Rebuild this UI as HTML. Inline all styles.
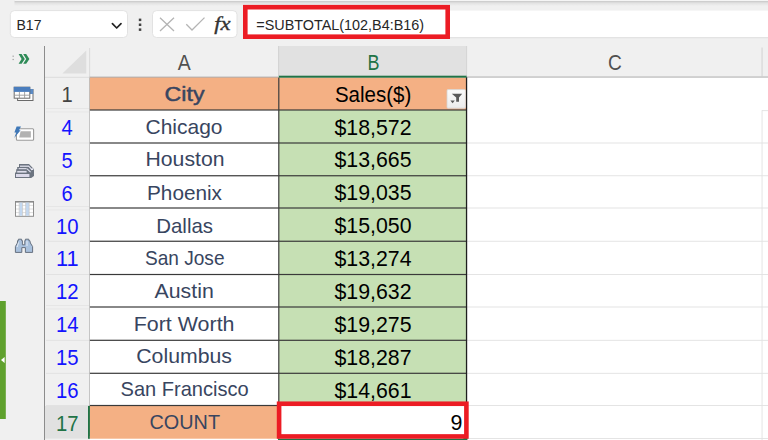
<!DOCTYPE html>
<html lang="en">
<head>
<meta charset="utf-8">
<title>SUBTOTAL count</title>
<style>
html,body{margin:0;padding:0;background:#f0f0f0;}
body{width:768px;height:440px;overflow:hidden;position:relative;font-family:"Liberation Sans",sans-serif;}
svg{position:absolute;left:0;top:0;display:block;}
text{font-family:"Liberation Sans",sans-serif;}
.fx{font-family:"Liberation Serif",serif;font-style:italic;}
</style>
</head>
<body>
<svg width="768" height="440" viewBox="0 0 768 440">
<defs>
<linearGradient id="sh" x1="0" y1="0" x2="0" y2="1"><stop offset="0" stop-color="#c2c2c2"/><stop offset="0.45" stop-color="#e2e2e2"/><stop offset="1" stop-color="#f0f0f0"/></linearGradient>
<linearGradient id="fb" x1="0" y1="0" x2="0" y2="1"><stop offset="0" stop-color="#fbfbfb"/><stop offset="1" stop-color="#ececec"/></linearGradient>
</defs>
<rect x="0" y="0" width="768" height="440" fill="#f0f0f0"/>
<!-- top ribbon edge -->
<rect x="14.5" y="0.6" width="760" height="5.4" fill="url(#sh)"/>
<rect x="14.5" y="-3" width="760" height="3.7" fill="#ffffff"/>

<g id="namebox">
<rect x="10.3" y="10.6" width="117.2" height="26.9" rx="4" fill="#fff" stroke="#e2e2e2" stroke-width="1"/>
<text x="16.5" y="30" font-size="14" fill="#262626" textLength="25" lengthAdjust="spacingAndGlyphs">B17</text>
<polyline points="112.4,23.6 116.7,28 121,23.6" fill="none" stroke="#222" stroke-width="1.7" stroke-linecap="round" stroke-linejoin="round"/>
</g>
<g fill="#444"><rect x="138.8" y="18.6" width="2.5" height="2.5"/><rect x="138.8" y="23.5" width="2.5" height="2.5"/><rect x="138.8" y="28.4" width="2.5" height="2.5"/></g>
<g id="fbuttons">
<rect x="152.5" y="10.6" width="84.5" height="26.9" rx="4" fill="#fff" stroke="#e2e2e2" stroke-width="1"/>
<path d="M160,17.8 L174,31 M174,17.8 L160,31" stroke="#b4b4b4" stroke-width="1.3" fill="none"/>
<polyline points="186.3,24.2 192,30 204.5,17.6" stroke="#b4b4b4" stroke-width="1.3" fill="none"/>
<text class="fx" x="214.3" y="29.8" font-size="19.5" fill="#333" stroke="#333" stroke-width="0.35" textLength="16.4" lengthAdjust="spacingAndGlyphs">fx</text>
</g>
<g id="formulabar">
<rect x="243" y="10.6" width="530" height="26.7" fill="#fff"/>
<rect x="243" y="37.3" width="530" height="0.9" fill="#dcdcdc"/>
<rect x="245.3" y="7.2" width="202.4" height="29.5" fill="#fff" stroke="#ec1c24" stroke-width="4.6"/>
<text x="256.3" y="29.8" font-size="14.4" fill="#262626" textLength="167.8" lengthAdjust="spacingAndGlyphs">=SUBTOTAL(102,B4:B16)</text>
</g>
<g id="sidebar">
<rect x="44" y="46" width="1" height="394" fill="#8c8c8c"/>
<rect x="0" y="301" width="5.8" height="118" fill="#5fa12d"/>
<polygon points="1,360 4.6,357 4.6,363" fill="#fff"/>
<g fill="#b0b0b0"><rect x="12.4" y="55.6" width="1.6" height="1.2"/><rect x="12.4" y="58.9" width="1.6" height="1.2"/></g>
<g fill="#2e8b57"><path d="M18.6,54 L21.6,54 L24.8,58.9 L21.6,63.8 L18.6,63.8 L21.6,58.9 Z"/><path d="M23.2,54 L26.2,54 L29.4,58.9 L26.2,63.8 L23.2,63.8 L26.2,58.9 Z"/></g>
<g id="ic1">
<rect x="17.6" y="89.5" width="15.4" height="11" fill="#fff" stroke="#6a6a6a" stroke-width="1"/>
<rect x="29.8" y="89" width="3.4" height="5" fill="#5b8ac4"/>
<rect x="14.2" y="87.2" width="15.6" height="11" fill="#fff" stroke="#6a6a6a" stroke-width="1"/>
<rect x="13.8" y="86.9" width="16.4" height="5" fill="#4a7dbd"/>
<path d="M14.2,95.2 H29.8 M19.4,92 V98.2 M24.6,92 V98.2" stroke="#9a9a9a" stroke-width="0.9" fill="none"/>
</g>
<g id="ic2">
<rect x="16.4" y="128.7" width="17.2" height="11.5" rx="1" fill="#fff" stroke="#9a9a9a" stroke-width="1.1"/>
<polygon points="20.6,131.2 30.9,131.2 30.9,137.6 19.2,137.6" fill="#b2b2b2"/>
<polygon points="16.6,126.6 21,126.6 19,130.2 20.6,130.2 14.2,138 16.4,132.6 14.4,132.6" fill="#3f78b8"/>
</g>
<g id="ic3">
<path d="M19,164 H29 L34,169.2 V176 L31.2,178 H15 V172.6 H16.2 V169.2 H17.2 V167 H19 Z" fill="#6c7480"/>
<rect x="20" y="165.6" width="9" height="1.2" fill="#e6e6f2"/>
<rect x="18.6" y="168.1" width="8" height="1.1" fill="#e2e2ee"/>
<rect x="17.2" y="170.9" width="9.4" height="1.7" fill="#dedeec"/>
<rect x="16" y="174" width="13.4" height="3" fill="#dcdaea"/>
<path d="M28.6,166.2 L31.4,169.2 M26.8,168.6 L30.6,172.2" stroke="#e0e0ee" stroke-width="1.1" fill="none"/>
<path d="M31,169.6 L33.2,169" stroke="#f0f0fa" stroke-width="1.6" fill="none"/>
</g>
<g id="ic4">
<rect x="15.5" y="201.5" width="18" height="14.8" fill="#fff" stroke="#8e8e8e" stroke-width="1"/>
<rect x="15.2" y="201.1" width="18.6" height="1.5" fill="#8a8a8a"/>
<path d="M16,205.4 H33 M16,209 H33 M16,212.6 H33" stroke="#d6d6d6" stroke-width="0.8"/>
<rect x="19.4" y="202.6" width="3" height="13.2" fill="#c3d8f0"/>
<rect x="25.8" y="202.6" width="3.2" height="13.2" fill="#c3d8f0"/>
<path d="M19.2,202.6 V216 M22.6,202.6 V216 M25.6,202.6 V216 M29.2,202.6 V216" stroke="#c4c4c4" stroke-width="0.7"/>
</g>
<g id="ic5">
<path d="M18.4,239.2 H21.6 V240.6 H22.4 V244.8 H24.8 V240.6 H25.4 V239.2 H28.8 V240.6 H29.8 L30.4,243 L32.6,246.6 V252.4 H25.4 V247.6 H21.8 V252.4 H15.4 V246.6 L17.4,243 L17.6,240.6 H18.4 Z" fill="#a9c1dd" stroke="#66707f" stroke-width="1" stroke-linejoin="round"/>
<path d="M17.2,247 L18.6,242.4 M27,241 V246" stroke="#e4ecf6" stroke-width="1"/>
</g>
</g>
<g id="colheaders">
<polygon points="86.3,50.6 86.3,73.6 62.4,73.6" fill="#dedede"/>
<rect x="278.6" y="46" width="187.9" height="30" fill="#e1e1e1"/>
<rect x="45" y="76.8" width="44.5" height="0.9" fill="#d9d9d9"/>
<rect x="89.2" y="48" width="0.9" height="29" fill="#d9d9d9"/>
<rect x="89.6" y="76.7" width="189" height="1.1" fill="#9c9c9c"/>
<rect x="466.6" y="76.6" width="302" height="1.1" fill="#a6a6a6"/>
<rect x="278.2" y="46" width="0.9" height="30" fill="#cfcfcf"/>
<rect x="466.2" y="46" width="0.9" height="31" fill="#d2d2d2"/>
<rect x="761.6" y="47.5" width="0.9" height="29.5" fill="#cdcdcd"/>
<text x="184.3" y="70.3" font-size="22" fill="#505050" text-anchor="middle" textLength="13" lengthAdjust="spacingAndGlyphs">A</text>
<text x="373.6" y="70.3" font-size="22" fill="#217346" text-anchor="middle" textLength="12" lengthAdjust="spacingAndGlyphs">B</text>
<text x="615" y="70.3" font-size="22" fill="#505050" text-anchor="middle" textLength="13.8" lengthAdjust="spacingAndGlyphs">C</text>
</g>
<g id="rowheaders">
<rect x="45" y="406" width="43.6" height="32.6" fill="#e1e1e1"/>
<rect x="88" y="405.6" width="2" height="33.2" fill="#217346"/>
<rect x="89.2" y="77.7" width="0.9" height="328" fill="#b4b4b4"/>
<rect x="46" y="108.00" width="43" height="0.9" fill="#e5e5e5"/>
<rect x="46" y="111.50" width="43" height="0.9" fill="#e5e5e5"/>
<rect x="46" y="142.55" width="43" height="0.9" fill="#e0e0e0"/>
<rect x="46" y="175.30" width="43" height="0.9" fill="#e0e0e0"/>
<rect x="46" y="206.00" width="43" height="0.9" fill="#e5e5e5"/>
<rect x="46" y="209.50" width="43" height="0.9" fill="#e5e5e5"/>
<rect x="46" y="240.80" width="43" height="0.9" fill="#e0e0e0"/>
<rect x="46" y="274.05" width="43" height="0.9" fill="#e0e0e0"/>
<rect x="46" y="305.00" width="43" height="0.9" fill="#e5e5e5"/>
<rect x="46" y="308.50" width="43" height="0.9" fill="#e5e5e5"/>
<rect x="46" y="339.85" width="43" height="0.9" fill="#e0e0e0"/>
<rect x="46" y="372.85" width="43" height="0.9" fill="#e0e0e0"/>
<rect x="46" y="405.05" width="43" height="0.9" fill="#e0e0e0"/>
<text x="67.2" y="102.25" font-size="22" fill="#444" text-anchor="middle" textLength="11.2" lengthAdjust="spacingAndGlyphs">1</text>
<text x="67.2" y="134.75" font-size="22" fill="#1414ff" text-anchor="middle" textLength="11.2" lengthAdjust="spacingAndGlyphs">4</text>
<text x="67.2" y="167.9" font-size="22" fill="#1414ff" text-anchor="middle" textLength="11.2" lengthAdjust="spacingAndGlyphs">5</text>
<text x="67.2" y="200.6" font-size="22" fill="#1414ff" text-anchor="middle" textLength="11.2" lengthAdjust="spacingAndGlyphs">6</text>
<text x="67.2" y="233.5" font-size="22" fill="#1414ff" text-anchor="middle" textLength="22.6" lengthAdjust="spacingAndGlyphs">10</text>
<text x="67.2" y="266.4" font-size="22" fill="#1414ff" text-anchor="middle" textLength="22.6" lengthAdjust="spacingAndGlyphs">11</text>
<text x="67.2" y="299.3" font-size="22" fill="#1414ff" text-anchor="middle" textLength="22.6" lengthAdjust="spacingAndGlyphs">12</text>
<text x="67.2" y="332.1" font-size="22" fill="#1414ff" text-anchor="middle" textLength="22.6" lengthAdjust="spacingAndGlyphs">14</text>
<text x="67.2" y="365" font-size="22" fill="#1414ff" text-anchor="middle" textLength="22.6" lengthAdjust="spacingAndGlyphs">15</text>
<text x="67.2" y="397.9" font-size="22" fill="#1414ff" text-anchor="middle" textLength="22.6" lengthAdjust="spacingAndGlyphs">16</text>
<text x="67.2" y="430.6" font-size="22" fill="#217346" text-anchor="middle" textLength="22.6" lengthAdjust="spacingAndGlyphs">17</text>
</g>
<g id="cells">
<rect x="89.9" y="77.6" width="376.6" height="32.6" fill="#f4b084"/>
<rect x="89.9" y="110" width="189" height="295.5" fill="#ffffff"/>
<rect x="278.8" y="110" width="187.7" height="295.5" fill="#c6e0b4"/>
<rect x="89.9" y="436" width="189" height="5" fill="#ffffff"/>
<rect x="89.9" y="405.5" width="189" height="33.2" fill="#f4b084"/>
<rect x="467" y="77.7" width="302" height="363" fill="#ffffff"/>
<rect x="467" y="142.55" width="302" height="0.9" fill="#e1e1e1"/>
<rect x="467" y="175.30" width="302" height="0.9" fill="#e1e1e1"/>
<rect x="467" y="207.55" width="302" height="0.9" fill="#e1e1e1"/>
<rect x="467" y="240.80" width="302" height="0.9" fill="#e1e1e1"/>
<rect x="467" y="274.05" width="302" height="0.9" fill="#e1e1e1"/>
<rect x="467" y="306.55" width="302" height="0.9" fill="#e1e1e1"/>
<rect x="467" y="339.85" width="302" height="0.9" fill="#e1e1e1"/>
<rect x="467" y="372.85" width="302" height="0.9" fill="#e1e1e1"/>
<rect x="467" y="405.05" width="302" height="0.9" fill="#e1e1e1"/>
<rect x="467" y="438.05" width="302" height="0.9" fill="#e1e1e1"/>
<rect x="762" y="110.2" width="7" height="0.9" fill="#e1e1e1"/>
<rect x="761.6" y="110.2" width="0.9" height="330" fill="#e1e1e1"/>
<rect x="89.9" y="109.40" width="376.8" height="1.2" fill="#3a3a3a"/>
<rect x="89.9" y="142.40" width="376.8" height="1.2" fill="#3a3a3a"/>
<rect x="89.9" y="175.15" width="376.8" height="1.2" fill="#3a3a3a"/>
<rect x="89.9" y="207.40" width="376.8" height="1.2" fill="#3a3a3a"/>
<rect x="89.9" y="240.65" width="376.8" height="1.2" fill="#3a3a3a"/>
<rect x="89.9" y="273.90" width="376.8" height="1.2" fill="#3a3a3a"/>
<rect x="89.9" y="306.40" width="376.8" height="1.2" fill="#3a3a3a"/>
<rect x="89.9" y="339.70" width="376.8" height="1.2" fill="#3a3a3a"/>
<rect x="89.9" y="372.70" width="376.8" height="1.2" fill="#3a3a3a"/>
<rect x="89.9" y="404.90" width="376.8" height="1.2" fill="#3a3a3a"/>
<rect x="278.2" y="77.6" width="1.2" height="361" fill="#3c3c3c"/>
<rect x="465.9" y="77.2" width="1.3" height="362" fill="#1e1e1e"/>
<rect x="278.8" y="75.7" width="187.8" height="2" fill="#217346"/>
<rect x="278" y="438.7" width="186" height="1.6" fill="#217346"/>
<rect x="463.4" y="437.6" width="4" height="3" fill="#217346"/>
<rect x="279.1" y="403.75" width="187.3" height="32.7" fill="#fff" stroke="#ec1c24" stroke-width="4.6"/>
<rect x="447" y="89.6" width="18.4" height="18.6" rx="1" fill="url(#fb)" stroke="#d4d4d4" stroke-width="0.8"/>
<path d="M451.8,93.8 H462.2 L459,97.6 V101.8 H456.2 V97.6 Z" fill="#5a5a5a"/>
<polygon points="450.4,100.6 454.8,100.6 452.6,103.2" fill="#5a5a5a"/>
<text x="164.5" y="100.75" font-size="21" fill="#384560" stroke="#384560" stroke-width="0.5" stroke-linejoin="round" textLength="40.0" lengthAdjust="spacingAndGlyphs">City</text>
<text x="145.5" y="133.75" font-size="21" fill="#384560" textLength="77.0" lengthAdjust="spacingAndGlyphs">Chicago</text>
<text x="145.5" y="166.25" font-size="21" fill="#384560" textLength="79.0" lengthAdjust="spacingAndGlyphs">Houston</text>
<text x="147" y="199.5" font-size="21" fill="#384560" textLength="75" lengthAdjust="spacingAndGlyphs">Phoenix</text>
<text x="156.25" y="232.5" font-size="21" fill="#384560" textLength="56.75" lengthAdjust="spacingAndGlyphs">Dallas</text>
<text x="145" y="265" font-size="21" fill="#384560" textLength="79.5" lengthAdjust="spacingAndGlyphs">San Jose</text>
<text x="154.5" y="298" font-size="21" fill="#384560" textLength="59.25" lengthAdjust="spacingAndGlyphs">Austin</text>
<text x="133.75" y="330.5" font-size="21" fill="#384560" textLength="100.75" lengthAdjust="spacingAndGlyphs">Fort Worth</text>
<text x="136.25" y="363" font-size="21" fill="#384560" textLength="95.75" lengthAdjust="spacingAndGlyphs">Columbus</text>
<text x="120.5" y="396.25" font-size="21" fill="#384560" textLength="128.25" lengthAdjust="spacingAndGlyphs">San Francisco</text>
<text x="149.5" y="428.75" font-size="21" fill="#384560" textLength="70.5" lengthAdjust="spacingAndGlyphs">COUNT</text>
<text x="334.9" y="101.7" font-size="21.4" fill="#000" textLength="76.40000000000003" lengthAdjust="spacingAndGlyphs">Sales($)</text>
<text x="334.5" y="134.5" font-size="21.4" fill="#000" textLength="77.0" lengthAdjust="spacingAndGlyphs">$18,572</text>
<text x="334.5" y="167" font-size="21.4" fill="#000" textLength="77.0" lengthAdjust="spacingAndGlyphs">$13,665</text>
<text x="334.5" y="200" font-size="21.4" fill="#000" textLength="77.0" lengthAdjust="spacingAndGlyphs">$19,035</text>
<text x="334.5" y="233" font-size="21.4" fill="#000" textLength="77.0" lengthAdjust="spacingAndGlyphs">$15,050</text>
<text x="334.5" y="265.5" font-size="21.4" fill="#000" textLength="77.0" lengthAdjust="spacingAndGlyphs">$13,274</text>
<text x="334.5" y="298.7" font-size="21.4" fill="#000" textLength="77.0" lengthAdjust="spacingAndGlyphs">$19,632</text>
<text x="334.5" y="331.8" font-size="21.4" fill="#000" textLength="77.0" lengthAdjust="spacingAndGlyphs">$19,275</text>
<text x="334.5" y="364.8" font-size="21.4" fill="#000" textLength="77.0" lengthAdjust="spacingAndGlyphs">$18,287</text>
<text x="334.5" y="397.6" font-size="21.4" fill="#000" textLength="77.0" lengthAdjust="spacingAndGlyphs">$14,661</text>
<text x="462.4" y="430.3" font-size="21.4" fill="#000" text-anchor="end">9</text>
</g>
</svg>
</body>
</html>
